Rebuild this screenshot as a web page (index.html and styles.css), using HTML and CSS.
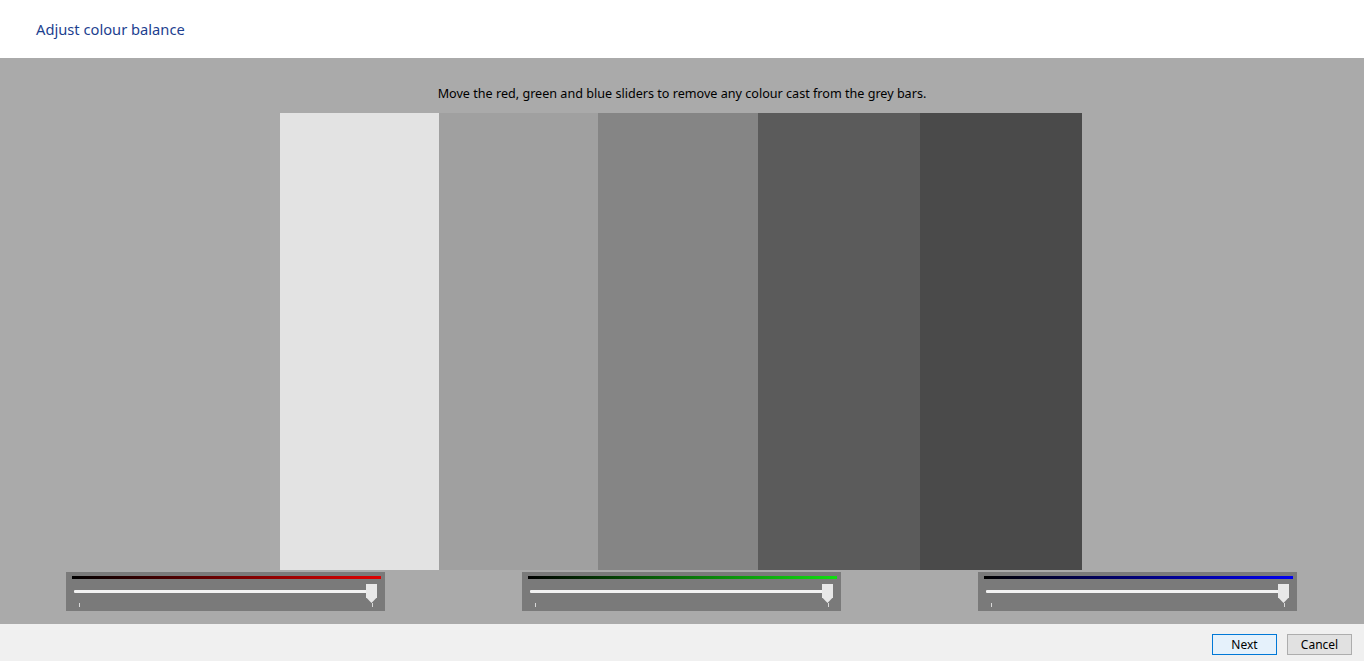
FILE: index.html
```html
<!DOCTYPE html>
<html lang="en">

<head>
    <meta charset="UTF-8">
    <title>Adjust colour balance</title>
    <link rel="stylesheet" href="styles.css">
</head>

<body>
    <header class="header">
        <h1 class="title">Adjust colour balance</h1>
    </header>

    <main class="stage">
        <p class="hint">Move the red, green and blue sliders to remove any colour cast from the grey bars.</p>

        <div class="bars">
            <div class="bar bar-1"></div>
            <div class="bar bar-2"></div>
            <div class="bar bar-3"></div>
            <div class="bar bar-4"></div>
            <div class="bar bar-5"></div>
        </div>

        <div class="sliders">
            <div class="slider">
                <div class="ramp ramp-red"></div>
                <div class="track"><span class="thumb"></span></div>
                <div class="ticks"><span></span><span></span></div>
            </div>
            <div class="slider">
                <div class="ramp ramp-green"></div>
                <div class="track"><span class="thumb"></span></div>
                <div class="ticks"><span></span><span></span></div>
            </div>
            <div class="slider">
                <div class="ramp ramp-blue"></div>
                <div class="track"><span class="thumb"></span></div>
                <div class="ticks"><span></span><span></span></div>
            </div>
        </div>
    </main>

    <footer class="footer">
        <button class="btn btn-default">Next</button>
        <button class="btn">Cancel</button>
    </footer>
</body>

</html>
```

FILE: styles.css
```css
body {
    margin: 0;
    font-family: "Noto Sans", "Open Sans", sans-serif;
    background-color: #aaaaaa;
    height: 661px;
    display: flex;
    flex-direction: column;
    overflow: hidden;
}

.header {
    height: 58px;
    background-color: #fff;
    display: flex;
    align-items: center;
    padding-left: 36px;
}

.title {
    margin: 0;
    font-size: 14.7px;
    font-weight: normal;
    color: #1d3f8f;
}

.stage {
    flex: 1;
    display: flex;
    flex-direction: column;
    align-items: center;
    background-color: #aaaaaa;
}

.hint {
    margin: 27px 0 0;
    height: 28px;
    font-size: 12.6px;
    color: #000;
    line-height: 18px;
}

.bars {
    display: flex;
    height: 457px;
    margin-left: -2px;
}

.bar {
    width: 159px;
}

.bar-1 { background-color: #e3e3e3; }
.bar-2 { background-color: #a0a0a0; }
.bar-3 { background-color: #858585; width: 160px; }
.bar-4 { background-color: #5b5b5b; width: 162px; }
.bar-5 { background-color: #4a4a4a; width: 162px; }

.sliders {
    align-self: stretch;
    display: flex;
    justify-content: space-between;
    padding: 2px 67px 0 66px;
}

.slider {
    width: 319px;
    height: 39px;
    background-color: #7a7a7a;
    box-sizing: border-box;
    padding: 4px 4px 0 6px;
}

.ramp {
    height: 3px;
}

.ramp-red { background: linear-gradient(to right, #000, #e00000); }
.ramp-green { background: linear-gradient(to right, #000, #10e010); }
.ramp-blue { background: linear-gradient(to right, #000, #0000f0); }

.track {
    position: relative;
    margin: 11px 9px 0 2px;
    height: 3px;
    background-color: #f2f2f2;
    border-radius: 1px;
}

.thumb {
    position: absolute;
    right: -5px;
    top: -6px;
    width: 11px;
    height: 19px;
    background-color: #e8e8e8;
    clip-path: polygon(0 0, 100% 0, 100% 70%, 50% 100%, 0 70%);
}

.ticks {
    display: flex;
    justify-content: space-between;
    margin: 10px 8px 0 7px;
}

.ticks span {
    width: 1px;
    height: 4px;
    background-color: #d8d8d8;
}

.footer {
    height: 37px;
    box-sizing: border-box;
    background-color: #f0f0f0;
    display: flex;
    justify-content: flex-end;
    align-items: flex-start;
    gap: 10px;
    padding: 10px 12px 0 0;
}

.btn {
    width: 65px;
    height: 21px;
    font-family: "Noto Sans", "Open Sans", sans-serif;
    font-size: 12px;
    padding: 0;
    background-color: #e1e1e1;
    border: 1px solid #adadad;
    color: #000;
}

.btn-default {
    border-color: #0078d7;
    background-color: #e5f1fb;
}
```
